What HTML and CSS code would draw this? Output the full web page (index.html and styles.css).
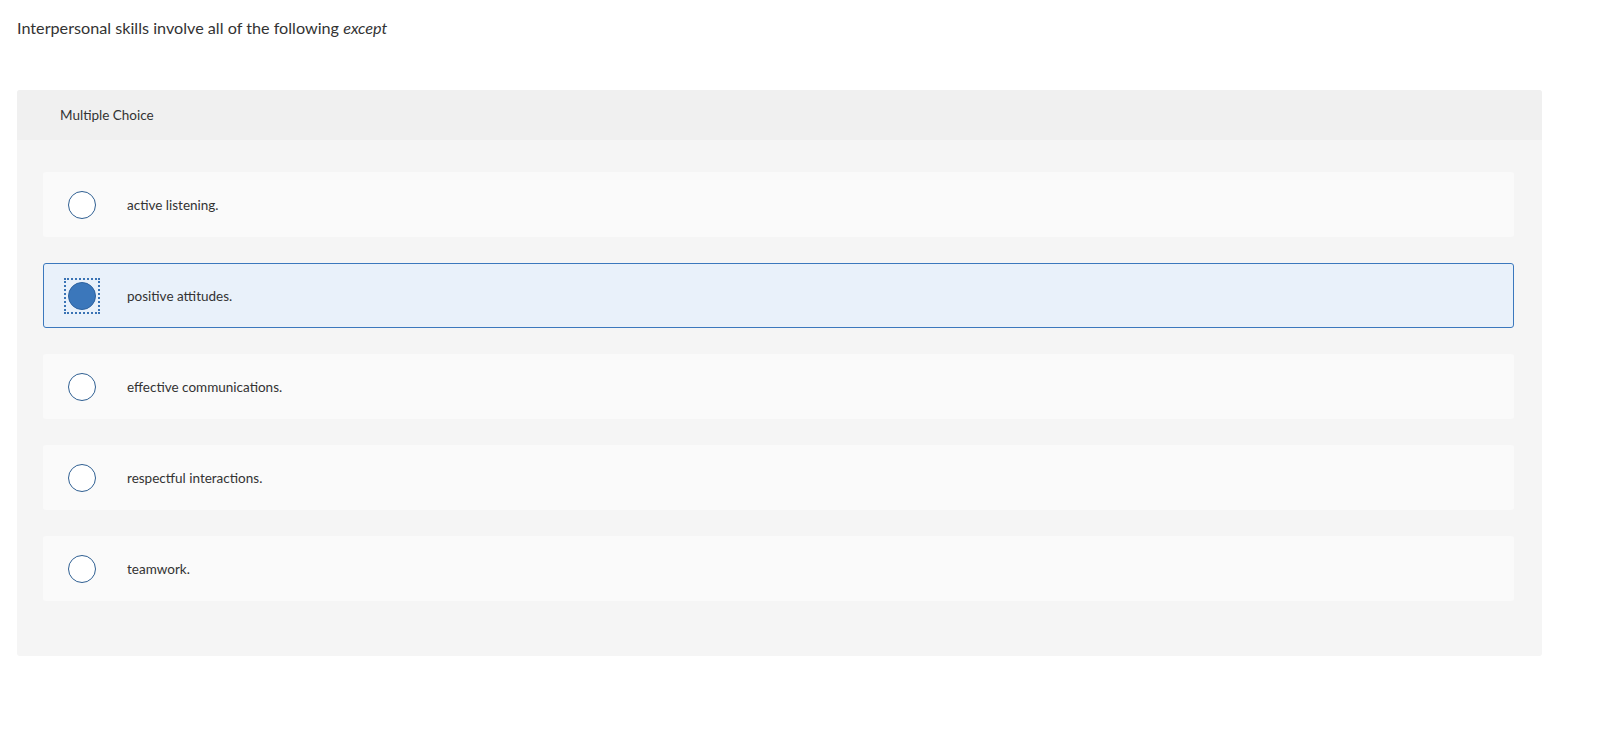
FILE: index.html
```html
<!DOCTYPE html>
<html>
<head>
<meta charset="utf-8">
<link rel="stylesheet" href="styles.css">
</head>
<body>
<div class="question">Interpersonal skills involve all of the following <em>except</em></div>
<div class="panel">
  <div class="panel-head">Multiple Choice</div>
  <div class="panel-body">
    <div class="choice"><span class="radio"></span><span class="label">active listening.</span></div>
    <div class="choice selected"><span class="focus"><span class="radio"></span></span><span class="label">positive attitudes.</span></div>
    <div class="choice"><span class="radio"></span><span class="label">effective communications.</span></div>
    <div class="choice"><span class="radio"></span><span class="label">respectful interactions.</span></div>
    <div class="choice"><span class="radio"></span><span class="label">teamwork.</span></div>
  </div>
</div>
</body>
</html>
```
FILE: styles.css
```css
html, body { margin: 0; padding: 0; background: #fff; }
body { font-family: Lato, "Open Sans", "Liberation Sans", sans-serif; color: #333; }
.question { box-sizing: border-box; padding: 18px 17px 0; font-size: 16.2px; line-height: 20px; color: #333; height: 90px; }
.question em { font-style: italic; }
.panel { margin-left: 17px; width: 1525px; background: #f5f5f5; border-radius: 3px; overflow: hidden; }
.panel-head { height: 50px; background: #f0f0f0; display: flex; align-items: center; padding-left: 43px; font-size: 13.5px; color: #333; }
.panel-body { padding: 32px 28px 55px 26px; display: flex; flex-direction: column; gap: 26px; }
.choice { box-sizing: border-box; height: 65px; background: #fafafa; border: 1px solid transparent; border-radius: 3px; display: flex; align-items: center; padding-left: 24px; }
.choice.selected { background: #e9f1fa; border-color: #3b78bd; }
.radio { box-sizing: border-box; width: 28px; height: 28px; border-radius: 50%; border: 1.5px solid #2f5f92; background: #fff; flex: none; }
.focus { display: flex; align-items: center; justify-content: center; width: 30px; height: 30px; outline: 2px dotted #3a73b4; outline-offset: 1px; margin: -1px; flex: none; }
.selected .radio { background: #3b77bb; border-color: #2d62a0; }
.label { margin-left: 31px; font-size: 13.5px; color: #333; }
```
